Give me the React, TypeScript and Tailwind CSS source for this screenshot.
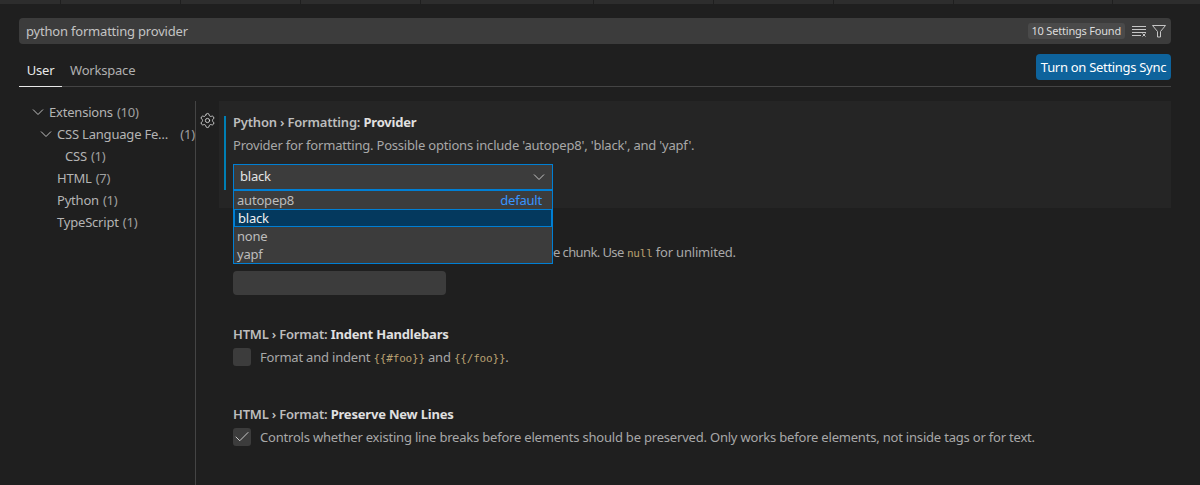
import React from "react";
import { Check, Settings } from "lucide-react";

const Chevron = ({ className }: { className?: string }) => (
  <svg width="16" height="16" viewBox="0 0 16 16" fill="none" stroke="currentColor" strokeWidth="1" className={className}>
    <path d="M3 5.5l5 5 5-5" />
  </svg>
);

const TreeRow = ({ pad, open, label, count }: { pad: string; open?: boolean; label: string; count: string }) => (
  <div className={`flex h-[22px] items-center text-[#b4b4b4] ${pad}`}>
    {open && <Chevron className="mr-[3px] text-[#c0c0c0]" />}
    <span>{label}</span>
    <span className="ml-1 text-[#a0a0a0]">{count}</span>
  </div>
);

const Code = ({ children }: { children: React.ReactNode }) => (
  <span className="font-['DejaVu_Sans_Mono',monospace] text-[11px] leading-none text-[#b9a071]">{children}</span>
);

const SettingTitle = ({ cat, name }: { cat: string; name: string }) => (
  <div className="font-semibold text-[#bdbdbd]">
    {cat} <span className="font-bold text-[#e0e0e0]">{name}</span>
  </div>
);

const tabStops = ["w-[61px]", "w-[120px]", "w-[120px]", "w-[120px]", "w-[173px]", "w-[120px]", "w-[120px]", "w-[120px]", "w-[159px]"];

export default function App() {
  return (
    <div className="h-[485px] w-[1200px] overflow-hidden bg-[#1f1f1f] font-['Noto_Sans','Open_Sans',sans-serif] text-[13px] leading-[18px] tracking-[-0.2px]">
      {/* tab strip cut off at the top */}
      <div className="flex h-[4px] bg-[#2d2d2d]">
        {tabStops.map((w, i) => (
          <div key={i} className={`${w} border-r border-[#1f1f1f]`} />
        ))}
      </div>

      <div className="pl-[19px] pr-[29px] pt-[14px]">
        {/* search */}
        <div className="flex h-[26px] items-center rounded-sm bg-[#3c3c3c] pl-[7px] pr-[4px]">
          <span className="flex-1 text-[#c4c4c4]">python formatting provider</span>
          <span className="rounded-[3px] bg-[#4a4a4a] px-1 text-[11px] leading-[16px] text-[#dcdcdc]">10 Settings Found</span>
          <svg width="16" height="16" viewBox="0 0 16 16" className="ml-[6px] text-[#c5c5c5]" fill="none" stroke="currentColor" strokeWidth="1">
            <path d="M1 3.5h14M1 6.5h14M1 9.5h14M1 12.5h9" />
            <path d="M11.5 10.5l3 3M14.5 10.5l-3 3" />
          </svg>
          <svg width="16" height="16" viewBox="0 0 16 16" className="ml-[4px] text-[#c5c5c5]" fill="none" stroke="currentColor" strokeWidth="1">
            <path d="M1.5 2.5h13l-5 6v5.5h-3V8.5z" />
          </svg>
        </div>

        {/* tabs */}
        <div className="mt-[8px] flex h-[35px] justify-between border-b border-[#444444]">
          <div className="flex">
            <div className="flex h-[35px] w-[43px] items-center justify-center border-b border-[#e8e8e8] pt-[1px] text-[#e8e8e8]">User</div>
            <div className="flex items-center px-[8px] pt-[1px] text-[#b0b0b0]">Workspace</div>
          </div>
          <div className="mt-[2px] flex h-[26px] w-[135px] items-center justify-center rounded-sm bg-[#0e639c] tracking-[-0.3px] text-white">Turn on Settings Sync</div>
        </div>
      </div>

      <div className="mt-[14px] flex h-[384px]">
        {/* tree */}
        <div className="w-[196px] shrink-0 border-r border-[#444444]">
          <TreeRow pad="pl-[30px]" open label="Extensions" count="(10)" />
          <div className="flex h-[22px] items-center pl-[38px] text-[#b4b4b4]">
            <Chevron className="mr-[3px] text-[#c0c0c0]" />
            <span className="flex-1">CSS Language Fe…</span>
            <span className="text-[#a0a0a0]">(1)</span>
          </div>
          <TreeRow pad="pl-[65px]" label="CSS" count="(1)" />
          <TreeRow pad="pl-[57px]" label="HTML" count="(7)" />
          <TreeRow pad="pl-[57px]" label="Python" count="(1)" />
          <TreeRow pad="pl-[57px]" label="TypeScript" count="(1)" />
        </div>

        {/* settings list */}
        <div className="flex-1">
          <div className="flex">
            <div className="flex w-[23px] shrink-0 justify-center pt-[11px]">
              <Settings size={17} strokeWidth={1.25} className="text-[#d8d8d8]" />
            </div>
            <div className="relative mr-[29px] h-[107px] flex-1 bg-[#252525] pl-[5px] pt-[15px]">
              <div className="flex flex-col border-l-2 border-[#007fb4] pl-[7px]">
                <div className="-mt-[3px] pb-[1px]"><SettingTitle cat="Python › Formatting:" name="Provider" /></div>
                <div className="mt-[4px] text-[#a8a8a8]">Provider for formatting. Possible options include 'autopep8', 'black', and 'yapf'.</div>
                <div className="mt-[10px] flex h-[26px] w-[320px] items-center justify-between border border-[#007fd4] bg-[#3c3c3c] pl-[6px] pr-[5px] text-[#e4e4e4]">
                  <span className="-mt-[2px]">black</span>
                  <Chevron className="text-[#c5c5c5]" />
                </div>
              </div>
              {/* open dropdown */}
              <div className="absolute left-[14px] top-[89px] z-10 w-[320px] border border-[#007fd4] bg-[#3c3c3c] text-[#bdbdbd]">
                <div className="flex justify-between pl-[3px] pr-[10px]">
                  <span>autopep8</span>
                  <span className="text-[#3794ff]">default</span>
                </div>
                <div className="h-[18px] border border-[#007fd4] bg-[#04395e] pl-[3px] leading-[16px] text-[#f0f0f0]">black</div>
                <div className="pl-[3px]">none</div>
                <div className="pl-[3px]">yapf</div>
              </div>
            </div>
          </div>

          <div className="pl-[37px]">
            <div className="mt-[35px] pl-[320px] text-[#a8a8a8]">
              <span className="tracking-[-0.6px]">e chunk. Use</span> <Code>null</Code> for unlimited.
            </div>
            <div className="mt-[10px] h-[24px] w-[213px] rounded-sm bg-[#3c3c3c]" />

            <div className="mt-[30px]"><SettingTitle cat="HTML › Format:" name="Indent Handlebars" /></div>
            <div className="mt-[5px] flex items-center">
              <div className="h-[18px] w-[18px] rounded-[3px] bg-[#3c3c3c]" />
              <span className="ml-[9px] text-[#a8a8a8]">
                Format and indent <Code>{"{{#foo}}"}</Code> and <Code>{"{{/foo}}"}</Code>.
              </span>
            </div>

            <div className="mt-[39px]"><SettingTitle cat="HTML › Format:" name="Preserve New Lines" /></div>
            <div className="mt-[5px] flex items-center">
              <div className="flex h-[18px] w-[18px] items-center justify-center rounded-[3px] bg-[#3c3c3c]">
                <Check size={18} strokeWidth={1.1} className="text-[#e8e8e8]" />
              </div>
              <span className="ml-[9px] text-[#a8a8a8]">
                Controls whether existing line breaks before elements should be preserved. Only works before elements, not inside tags or for text.
              </span>
            </div>
          </div>
        </div>
      </div>
    </div>
  );
}
